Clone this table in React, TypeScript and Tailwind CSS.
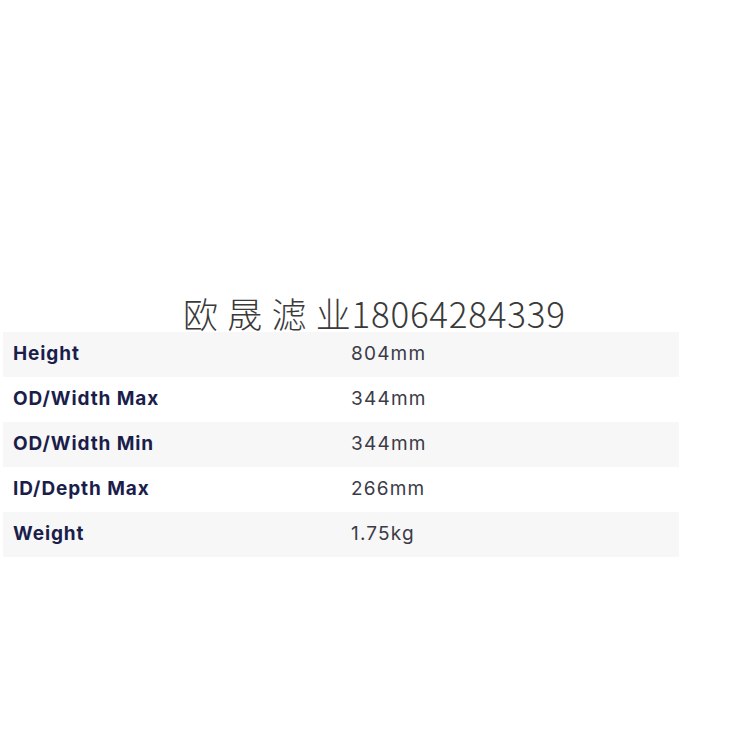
import React from "react";

const rows = [
  ["Height", "804mm"],
  ["OD/Width Max", "344mm"],
  ["OD/Width Min", "344mm"],
  ["ID/Depth Max", "266mm"],
  ["Weight", "1.75kg"],
];

export default function App() {
  return (
    <div className="w-[750px] h-[750px] bg-white relative" style={{ fontFamily: "Inter, 'Noto Sans', sans-serif" }}>
      <div className="pt-[293px] pl-[3px] w-[679px]">
        <div
          className="h-[39px] pl-[180px] text-[35px] leading-[39px] text-[#3a3a3a] font-light tracking-[0.75px] whitespace-nowrap"
          style={{ fontFamily: "'Noto Sans CJK SC', 'Noto Sans', sans-serif" }}
        >
          欧 晟 滤 业18064284339
        </div>
        <div className="flex flex-col">
          {rows.map(([k, v], i) => (
            <div
              key={k}
              className={`flex items-center h-[45px] pb-[1px] ${i % 2 === 0 ? "bg-[#f7f7f7]" : "bg-white"}`}
            >
              <div className="w-[338px] pl-[10px] text-[19px] font-bold text-[#1b1e4b] tracking-[0.9px]">{k}</div>
              <div className="pl-[10px] text-[19px] text-[#3b3b48] tracking-[1.2px]">{v}</div>
            </div>
          ))}
        </div>
      </div>
    </div>
  );
}
